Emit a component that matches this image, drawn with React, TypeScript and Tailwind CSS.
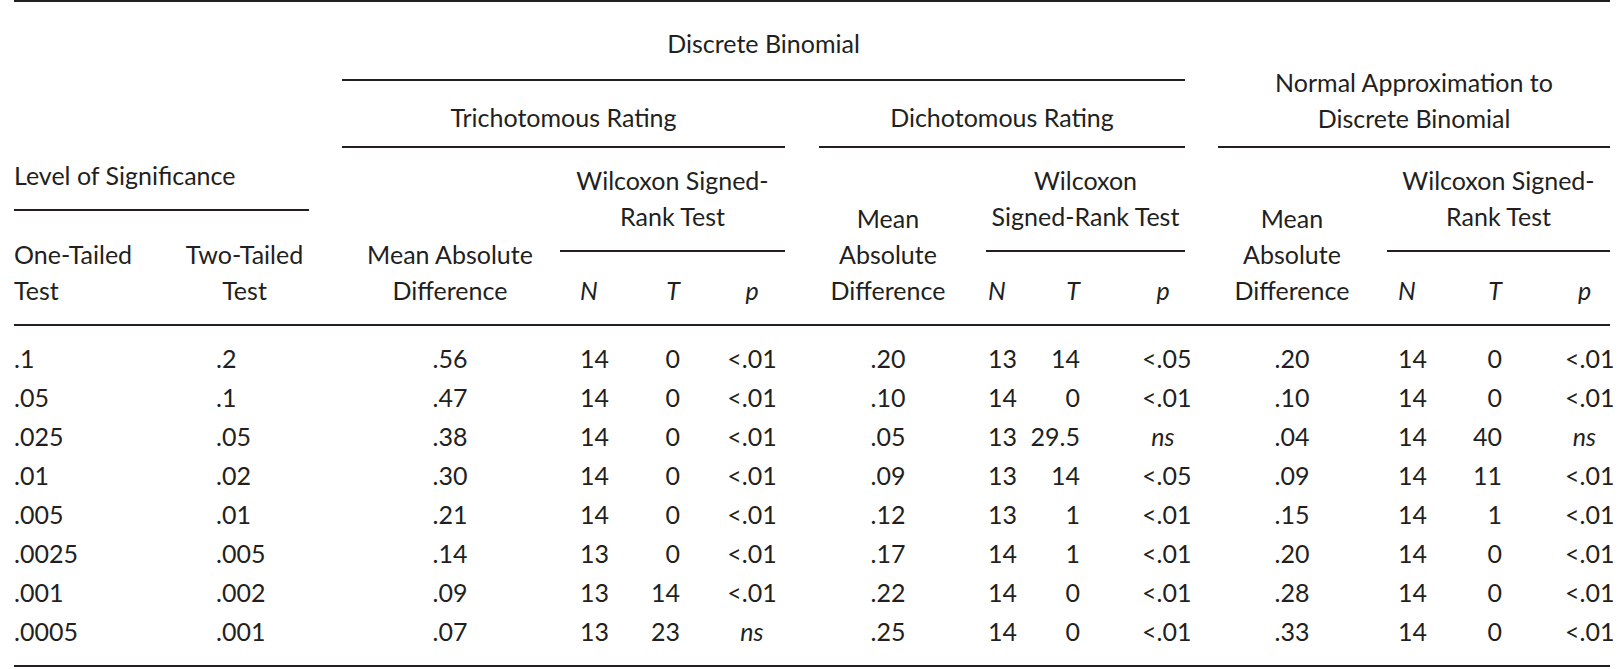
import React from "react"

const COLS =
  "grid grid-cols-[166px_146px_234px_70px_65px_107px_178px_50px_70px_100px_187px_63px_70px_90px]"

// alignment of each column's figures, shared by the N / T / p heads
const CELL = [
  "text-left",
  "pl-[36px] text-left",
  "pl-[14px] text-center",
  "pl-[20px] text-left",
  "pr-[15px] text-right",
  "pl-[29px] pr-[22px] text-center",
  "pl-[17px] pr-[23px] text-center",
  "pl-[8px] text-left",
  "pr-[20px] text-right",
  "pl-[42px] pr-[16px] text-center",
  "pl-[18px] pr-[21px] text-center",
  "pl-[11px] text-left",
  "pr-[18px] text-right",
  "pl-[45px] pr-[6px] text-center",
]

const ROWS: string[][] = [
  [".1", ".2", ".56", "14", "0", "<.01", ".20", "13", "14", "<.05", ".20", "14", "0", "<.01"],
  [".05", ".1", ".47", "14", "0", "<.01", ".10", "14", "0", "<.01", ".10", "14", "0", "<.01"],
  [".025", ".05", ".38", "14", "0", "<.01", ".05", "13", "29.5", "ns", ".04", "14", "40", "ns"],
  [".01", ".02", ".30", "14", "0", "<.01", ".09", "13", "14", "<.05", ".09", "14", "11", "<.01"],
  [".005", ".01", ".21", "14", "0", "<.01", ".12", "13", "1", "<.01", ".15", "14", "1", "<.01"],
  [".0025", ".005", ".14", "13", "0", "<.01", ".17", "14", "1", "<.01", ".20", "14", "0", "<.01"],
  [".001", ".002", ".09", "13", "14", "<.01", ".22", "14", "0", "<.01", ".28", "14", "0", "<.01"],
  [".0005", ".001", ".07", "13", "23", "ns", ".25", "14", "0", "<.01", ".33", "14", "0", "<.01"],
]

const rule = "border-b-2 border-[#231f20]"

function StatHeads({ start }: { start: number }) {
  const heads = ["N", "T", "p"]
  return (
    <>
      {heads.map((h, i) => (
        <div
          key={h}
          className={`row-start-5 flex flex-col justify-end pb-[16px] italic ${CELL[start + i]}`}
          style={{ gridColumnStart: start + i + 1 }}
        >
          {h}
        </div>
      ))}
    </>
  )
}

export default function App() {
  return (
    <div className="w-[1623px] h-[669px] bg-white pl-[14px] pr-[13px] font-['Lato',sans-serif] text-[25px] leading-[36px] text-[#231f20]">
      <div className="border-t-2 border-[#231f20]">
        {/* column heads */}
        <div className={`${COLS} grid-rows-[79px_67px_63px_41px_72px] whitespace-nowrap ${rule}`}>
          <div className={`col-start-3 col-span-8 row-start-1 ml-[16px] mr-[15px] flex items-end justify-center pb-[18px] ${rule}`}>
            Discrete Binomial
          </div>
          <div className={`col-start-11 col-span-4 row-start-1 row-span-2 ml-[18px] flex flex-col justify-end pb-[10px] text-center ${rule}`}>
            <span>Normal Approximation to</span>
            <span>Discrete Binomial</span>
          </div>
          <div className={`col-start-3 col-span-4 row-start-2 ml-[16px] mr-[17px] flex items-end justify-center pb-[11px] ${rule}`}>
            Trichotomous Rating
          </div>
          <div className={`col-start-7 col-span-4 row-start-2 ml-[17px] mr-[15px] flex items-end justify-center pb-[11px] ${rule}`}>
            Dichotomous Rating
          </div>

          <div className={`col-start-1 col-span-2 row-start-3 mr-[17px] flex items-end pb-[16px] ${rule}`}>
            Level of Significance
          </div>
          <div className="col-start-3 row-start-3 row-span-3 pl-[14px] flex flex-col justify-end pb-[16px] text-center">
            <span>Mean Absolute</span>
            <span>Difference</span>
          </div>
          <div className={`col-start-4 col-span-3 row-start-3 row-span-2 mr-[17px] flex flex-col justify-end pb-[16px] text-center ${rule}`}>
            <span>Wilcoxon Signed-</span>
            <span>Rank Test</span>
          </div>
          <div className="col-start-7 row-start-3 row-span-3 pl-[17px] pr-[23px] flex flex-col justify-end pb-[16px] text-center">
            <span>Mean</span>
            <span>Absolute</span>
            <span>Difference</span>
          </div>
          <div className={`col-start-8 col-span-3 row-start-3 row-span-2 ml-[6px] mr-[15px] flex flex-col justify-end pb-[16px] text-center ${rule}`}>
            <span>Wilcoxon</span>
            <span>Signed-Rank Test</span>
          </div>
          <div className="col-start-11 row-start-3 row-span-3 pl-[18px] pr-[21px] flex flex-col justify-end pb-[16px] text-center">
            <span>Mean</span>
            <span>Absolute</span>
            <span>Difference</span>
          </div>
          <div className={`col-start-12 col-span-3 row-start-3 row-span-2 flex flex-col justify-end pb-[16px] text-center ${rule}`}>
            <span>Wilcoxon Signed-</span>
            <span>Rank Test</span>
          </div>

          <div className="col-start-1 row-start-4 row-span-2 flex flex-col justify-end pb-[16px]">
            <span>One-Tailed</span>
            <span>Test</span>
          </div>
          <div className="col-start-2 row-start-4 row-span-2 mr-[17px] flex flex-col justify-end pb-[16px] text-center">
            <span>Two-Tailed</span>
            <span>Test</span>
          </div>
          <StatHeads start={3} />
          <StatHeads start={7} />
          <StatHeads start={11} />
        </div>

        {/* body */}
        <div className={`pt-[12px] pb-[15px] ${rule}`}>
          {ROWS.map((row, r) => (
            <div key={r} className={`${COLS} h-[39px] items-center whitespace-nowrap`}>
              {row.map((v, c) => (
                <div key={c} className={`${CELL[c]} ${v === "ns" ? "italic" : ""}`}>
                  {v}
                </div>
              ))}
            </div>
          ))}
        </div>
      </div>
    </div>
  )
}
